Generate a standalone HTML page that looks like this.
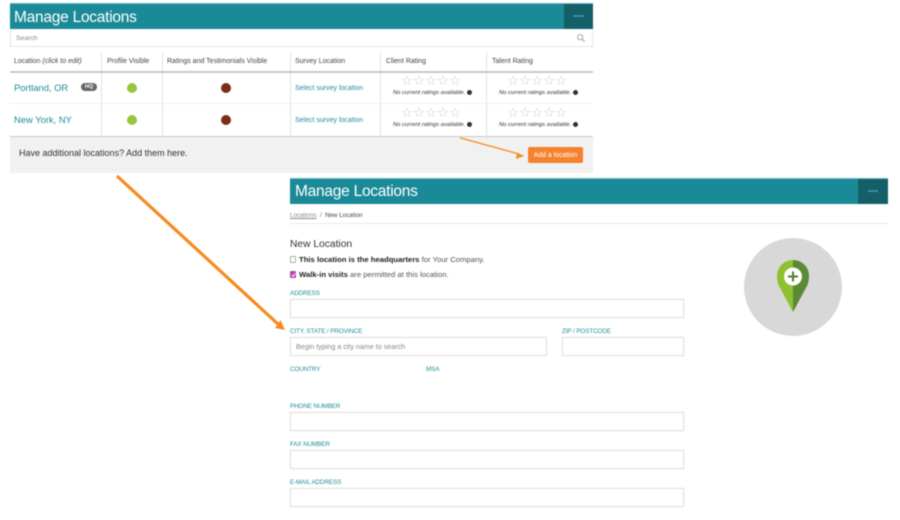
<!DOCTYPE html>
<html><head><meta charset="utf-8">
<style>
html,body{margin:0;padding:0;background:#fff}
#p{position:relative;width:900px;height:520px;overflow:hidden;background:#fff;font-family:"Liberation Sans",sans-serif;color:#444;filter:blur(.45px)}
#p div{position:absolute;white-space:nowrap}
.bar{background:#1b8a98;border-top:1px solid #6fb8c2;box-sizing:border-box}
.dk{background:#155f69}
.dash{background:#2a96a6;height:2px}
.ttl{font-size:15.500px;line-height:19px;color:#fff;letter-spacing:-.25px}
.h{font-size:7px;line-height:10px;color:#444}
.v{background:#e2e2e2;width:1px}
.dot{width:10px;height:10px;border-radius:50%}
.lk{color:#1f8d9c;font-size:9.400px;line-height:13px}
.sm{font-size:7px;line-height:10px;color:#1f8d9c}
.st{font-size:13.500px;line-height:14px;color:#cfcfcf;letter-spacing:-.1px}
.nr{font-size:5.800px;line-height:8px;font-style:italic;color:#333}
.i{width:5px;height:5px;border-radius:50%;background:#333}
.lb{font-size:6.300px;line-height:9px;color:#1f8d9c;letter-spacing:-.1px}
.in{border:1px solid #e0e0e0;box-sizing:border-box;background:#fff;box-shadow:0 0 1px #e8e8e8}
.cb{font-size:7.700px;line-height:10px;color:#555}
</style></head><body><div id="p">

<div class="bar" style="left:10px;top:3px;width:583px;height:26px"></div>
<div class="dk" style="left:564px;top:4px;width:29px;height:25px"></div>
<div class="dash" style="left:573px;top:15px;width:11px"></div>
<div class="ttl" style="left:14px;top:7.500px">Manage Locations</div>
<div style="left:10px;top:29px;width:583px;height:18px;border:1px solid #e6e6e6;border-top:0;box-sizing:border-box"></div>
<div style="left:16px;top:33.500px;font-size:6.800px;line-height:10px;color:#888">Search</div>
<svg style="position:absolute;left:576px;top:33px" width="10" height="10" viewBox="0 0 10 10"><circle cx="4.200" cy="4.200" r="2.600" fill="none" stroke="#aaa" stroke-width="1"/><path d="M6.300 6.300L8.600 8.600" stroke="#aaa" stroke-width="1.200"/></svg>

<div class="h" style="left:14px;top:56.500px">Location <i>(click to edit)</i></div>
<div class="h" style="left:107px;top:56.500px">Profile Visible</div>
<div class="h" style="left:167px;top:56.500px">Ratings and Testimonials Visible</div>
<div class="h" style="left:295px;top:56.500px">Survey Location</div>
<div class="h" style="left:386px;top:56.500px">Client Rating</div>
<div class="h" style="left:492px;top:56.500px">Talent Rating</div>

<div class="v" style="left:101px;top:52px;height:84px"></div>
<div class="v" style="left:162px;top:52px;height:84px"></div>
<div class="v" style="left:290px;top:52px;height:84px"></div>
<div class="v" style="left:380px;top:52px;height:84px"></div>
<div class="v" style="left:486px;top:52px;height:84px"></div>
<div style="left:10px;top:71px;width:583px;height:1.500px;background:#c9c9c9"></div>
<div style="left:10px;top:103px;width:583px;height:1px;background:#f0f0f0"></div>
<div style="left:10px;top:136px;width:583px;height:37px;background:#f1f1f1;border-top:1.500px solid #c9c9c9;box-sizing:border-box"></div>

<div class="lk" style="left:14px;top:81px">Portland, OR</div>
<div style="left:81px;top:83px;width:16px;height:8px;border-radius:4px;background:#666;color:#fff;font-size:5.500px;line-height:8px;font-weight:bold;text-align:center">HQ</div>
<div class="lk" style="left:14px;top:113px">New York, NY</div>
<div class="dot" style="left:127px;top:83px;background:#9bc53d"></div>
<div class="dot" style="left:127px;top:115px;background:#9bc53d"></div>
<div class="dot" style="left:221px;top:83px;background:#7a2d18"></div>
<div class="dot" style="left:221px;top:115px;background:#7a2d18"></div>
<div class="sm" style="left:295px;top:84px">Select survey location</div>
<div class="sm" style="left:295px;top:116px">Select survey location</div>

<div class="st" style="left:401px;top:74px">☆☆☆☆☆</div>
<div class="st" style="left:507px;top:74px">☆☆☆☆☆</div>
<div class="st" style="left:401px;top:106px">☆☆☆☆☆</div>
<div class="st" style="left:507px;top:106px">☆☆☆☆☆</div>
<div class="nr" style="left:393px;top:88.500px">No current ratings available.</div>
<div class="nr" style="left:499px;top:88.500px">No current ratings available.</div>
<div class="nr" style="left:393px;top:120.500px">No current ratings available.</div>
<div class="nr" style="left:499px;top:120.500px">No current ratings available.</div>
<div class="i" style="left:466.500px;top:89.500px"></div>
<div class="i" style="left:572.500px;top:89.500px"></div>
<div class="i" style="left:466.500px;top:121.500px"></div>
<div class="i" style="left:572.500px;top:121.500px"></div>

<div style="left:19px;top:147px;font-size:9px;line-height:12px;color:#333">Have additional locations? Add them here.</div>
<div style="left:528px;top:147px;width:55px;height:16px;background:#f5822f;border-radius:2px;color:#fff;font-size:6.900px;line-height:17px;text-align:center">Add a location</div>

<div class="bar" style="left:290px;top:178px;width:598px;height:26px"></div>
<div class="dk" style="left:858px;top:179px;width:30px;height:25px"></div>
<div class="dash" style="left:868px;top:190px;width:10px"></div>
<div class="ttl" style="left:295px;top:182px">Manage Locations</div>
<div style="left:290px;top:210.500px;font-size:6.200px;line-height:9px;color:#777"><span style="text-decoration:underline;color:#888">Locations</span> &nbsp;/&nbsp; <span style="color:#444">New Location</span></div>
<div style="left:290px;top:223px;width:597px;border-top:1px dotted #d5d5d5"></div>

<div style="left:290px;top:237.500px;font-size:10.250px;line-height:13px;color:#333">New Location</div>
<div style="left:290px;top:255.500px;width:4px;height:5px;border:1px solid #aaa;border-radius:1px;background:#fff"></div>
<div class="cb" style="left:299px;top:254.500px"><b style="color:#222">This location is the headquarters</b> for Your Company.</div>
<div style="left:290px;top:271px;width:4px;height:5px;border:1px solid #b04aaf;border-radius:1px;background:#b04aaf"></div>
<svg style="position:absolute;left:289.500px;top:270.500px" width="7" height="8" viewBox="0 0 7 8"><path d="M1.800 4l1.300 1.500L5.200 2.500" fill="none" stroke="#fff" stroke-width=".9"/></svg>
<div class="cb" style="left:299px;top:269.500px"><b style="color:#222">Walk-in visits</b> are permitted at this location.</div>

<div class="lb" style="left:290px;top:288.500px">ADDRESS</div>
<div class="in" style="left:290px;top:299px;width:394px;height:19px"></div>
<div class="lb" style="left:290px;top:326.500px">CITY, STATE / PROVINCE</div>
<div class="in" style="left:290px;top:337px;width:257px;height:19px"></div>
<div style="left:296px;top:342px;font-size:7.150px;line-height:10px;color:#888">Begin typing a city name to search</div>
<div class="lb" style="left:562px;top:326.500px">ZIP / POSTCODE</div>
<div class="in" style="left:562px;top:337px;width:122px;height:19px"></div>
<div class="lb" style="left:290px;top:364.500px">COUNTRY</div>
<div class="lb" style="left:426px;top:364.500px">MSA</div>
<div class="lb" style="left:290px;top:401.500px">PHONE NUMBER</div>
<div class="in" style="left:290px;top:412px;width:394px;height:19px"></div>
<div class="lb" style="left:290px;top:439.500px">FAX NUMBER</div>
<div class="in" style="left:290px;top:450px;width:394px;height:19px"></div>
<div class="lb" style="left:290px;top:477.500px">E-MAIL ADDRESS</div>
<div class="in" style="left:290px;top:488px;width:394px;height:19px"></div>

<svg style="position:absolute;left:0;top:0" width="900" height="520" viewBox="0 0 900 520">
<circle cx="793" cy="287" r="49" fill="#d8d8d8"/>
<path d="M793 260C784 260 777 267 777 276C777 279 777.500 282 778.500 285L793 312Z" fill="#8fc031"/>
<path d="M793 260C802 260 809 267 809 276C809 279 808.500 282 807.500 285L793 312Z" fill="#5b8a35"/>
<circle cx="793" cy="276.500" r="9" fill="#fff"/>
<path d="M793 271.500V281.500M788 276.500H798" stroke="#4f7d30" stroke-width="2"/>
<path d="M117 176L279 325" stroke="#f68b1f" stroke-width="3.200" fill="none"/>
<path d="M285 330L275 328L280.500 320Z" fill="#f68b1f"/>
<path d="M460 137.700L519 154" stroke="#f68b1f" stroke-width="1.300" fill="none"/>
<path d="M524.500 155.700L517 153L516 159Z" fill="#f68b1f"/>
</svg>
</div></body></html>
